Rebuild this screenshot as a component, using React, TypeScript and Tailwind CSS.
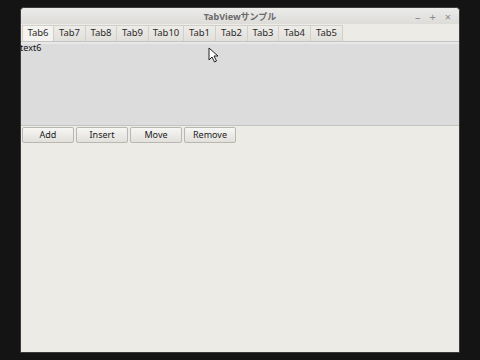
import React from 'react'

const tabs = ['Tab6', 'Tab7', 'Tab8', 'Tab9', 'Tab10', 'Tab1', 'Tab2', 'Tab3', 'Tab4', 'Tab5']
const tabWidths = [32, 33, 32, 33, 36, 33, 33, 32, 33, 33]
const buttons = ['Add', 'Insert', 'Move', 'Remove']

const font = { fontFamily: '"Noto Sans", "Noto Sans CJK JP", sans-serif' }

function Cursor() {
  return (
    <svg className="absolute left-[208px] top-[47px]" width="11" height="16" viewBox="0 0 11 16">
      <path d="M1 1 L1 13 L4 10 L6.5 15 L8.5 14 L6 9 L10 9 Z" fill="#fff" stroke="#222" strokeWidth="1" strokeLinejoin="round" />
    </svg>
  )
}

export default function App() {
  return (
    <div className="w-[480px] h-[360px] bg-[#141414] overflow-hidden relative" style={font}>
      <div className="ml-[20px] mt-[7px] w-[440px] h-[346px] bg-[#edebe5] rounded-t-[4px] flex flex-col border border-[#3a3a3a] relative">
        {/* title bar */}
        <div className="h-[16px] bg-gradient-to-b from-[#ebebea] to-[#dddcd9] rounded-t-[4px] flex items-center justify-center relative">
          <span className="text-[9px] font-bold text-[#6a6a6a] leading-none">TabViewサンプル</span>
          <div className="absolute right-[8px] top-0 h-full flex items-center gap-[9px] text-[#8a8a8a] text-[11px] leading-none">
            <span>–</span>
            <span>+</span>
            <span>×</span>
          </div>
        </div>
        {/* tab strip */}
        <div className="h-[17px] flex items-end pl-[1px] bg-[#edebe5]">
          {tabs.map((t, i) => (
            <div
              key={t}
              className={
                'h-[16px] shrink-0 flex items-center justify-center text-[9.5px] text-[#2a2a2a] border-l border-t border-r border-[#d2d0cb] -mr-[1px] ' +
                (i === 0 ? 'bg-[#f4f3f0]' : 'bg-gradient-to-b from-[#eeece8] to-[#e2e0db]')
              }
              style={{ width: tabWidths[i] }}
            >
              {t}
            </div>
          ))}
        </div>
        {/* tab content */}
        <div className="h-[85px] bg-[#dcdcdc] border-t border-b border-[#c4c4c4] relative">
          <div className="h-[2px] bg-[#e8e8e8]" />
          <span className="absolute -left-[1px] top-[0px] text-[9px] text-[#111] leading-[12px]">text6</span>
        </div>
        {/* buttons */}
        <div className="flex gap-[2px] pl-[1px] pt-[1px]">
          {buttons.map((b) => (
            <div
              key={b}
              className="w-[52px] h-[16px] flex items-center justify-center text-[9px] text-[#222] bg-gradient-to-b from-[#f6f6f4] to-[#e2e0db] border border-[#b9b7b2] rounded-[2px]"
            >
              {b}
            </div>
          ))}
        </div>
        <div className="flex-1" />
      </div>
      <Cursor />
    </div>
  )
}
